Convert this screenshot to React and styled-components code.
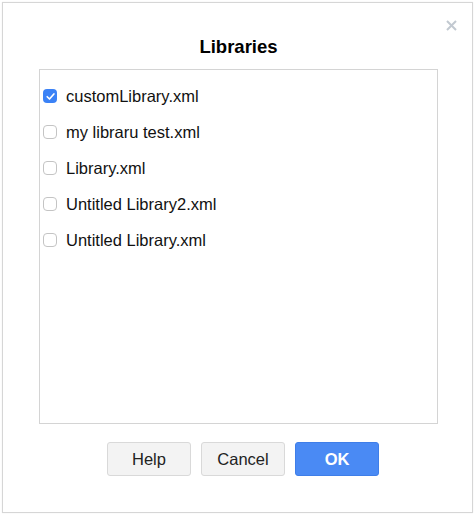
import React, { useState } from "react";
import styled, { createGlobalStyle } from "styled-components";

const GlobalStyle = createGlobalStyle`
  html, body {
    margin: 0;
    padding: 0;
    background: #ffffff;
    font-family: "Liberation Sans", Arial, sans-serif;
  }
`;

const libraries = [
  { name: "customLibrary.xml", checked: true },
  { name: "my libraru test.xml", checked: false },
  { name: "Library.xml", checked: false },
  { name: "Untitled Library2.xml", checked: false },
  { name: "Untitled Library.xml", checked: false },
];

const App = () => {
  const [items, setItems] = useState(libraries);

  const toggle = (i) => {
    setItems(items.map((it, j) => (j === i ? { ...it, checked: !it.checked } : it)));
  };

  return (
    <>
      <GlobalStyle />
      <Page>
        <Dialog>
          <Close>
            <svg width="11" height="11" viewBox="0 0 11 11">
              <path d="M1 1L10 10M10 1L1 10" stroke="#b4bcc6" strokeWidth="2" />
            </svg>
          </Close>
          <Title>Libraries</Title>
          <ListBox>
            {items.map((it, i) => (
              <Row key={it.name} onClick={() => toggle(i)}>
                <Check checked={it.checked}>
                  {it.checked && (
                    <svg width="11" height="11" viewBox="0 0 10 10">
                      <path d="M2 5.2L4.1 7.3L8.1 2.7" fill="none" stroke="#fff" strokeWidth="1.5" strokeLinecap="round" strokeLinejoin="round" />
                    </svg>
                  )}
                </Check>
                <Label>{it.name}</Label>
              </Row>
            ))}
          </ListBox>
          <Buttons>
            <Button>Help</Button>
            <Button>Cancel</Button>
            <Button primary>OK</Button>
          </Buttons>
        </Dialog>
      </Page>
    </>
  );
};
export default App;

const Page = styled.div`
  width: 474px;
  height: 515px;
  padding: 2px 1px 2px 2px;
  box-sizing: border-box;
`;

const Dialog = styled.div`
  position: relative;
  height: 100%;
  box-sizing: border-box;
  border: 1px solid #d6d6d6;
  box-shadow: 0 0 1px #e4e4e4;
  background: #fff;
  padding: 0 34px 0 36px;
  display: flex;
  flex-direction: column;
`;

const Close = styled.div`
  position: absolute;
  top: 14px;
  right: 15px;
  cursor: pointer;
  opacity: 0.8;
`;

const Title = styled.div`
  text-align: center;
  font-size: 18.5px;
  font-weight: bold;
  color: #000;
  margin-top: 33px;
  height: 33px;
`;

const ListBox = styled.div`
  height: 355px;
  box-sizing: border-box;
  border: 1px solid #d4d4d4;
  padding: 15px 0 0 2px;
  display: flex;
  flex-direction: column;
  gap: 14px;
`;

const Row = styled.div`
  display: flex;
  align-items: center;
  height: 22px;
  cursor: pointer;
`;

const Check = styled.div`
  width: 14px;
  height: 14px;
  box-sizing: border-box;
  border-radius: 4px;
  margin: 0 9px 0 1px;
  display: flex;
  align-items: center;
  justify-content: center;
  background: ${(p) => (p.checked ? "#3b82f6" : "#fff")};
  border: ${(p) => (p.checked ? "none" : "1px solid #c4c4c4")};
`;

const Label = styled.span`
  font-size: 16.5px;
  color: #111;
`;

const Buttons = styled.div`
  display: flex;
  justify-content: flex-end;
  gap: 10px;
  margin-top: 18px;
  padding-right: 59px;
`;

const Button = styled.button`
  width: 84px;
  height: 34px;
  box-sizing: border-box;
  border-radius: 3px;
  font-family: "Liberation Sans", Arial, sans-serif;
  font-size: 16.5px;
  font-weight: ${(p) => (p.primary ? "bold" : "normal")};
  color: ${(p) => (p.primary ? "#fff" : "#222")};
  background: ${(p) => (p.primary ? "#4a8af4" : "#f3f3f3")};
  border: 1px solid ${(p) => (p.primary ? "#3f7ee8" : "#d9d9d9")};
  cursor: pointer;
`;
